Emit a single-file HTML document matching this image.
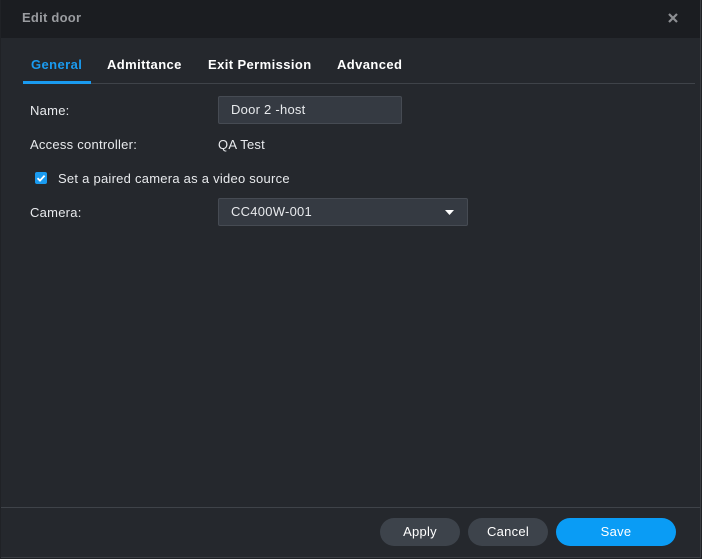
<!DOCTYPE html>
<html><head><meta charset="utf-8"><style>
*{margin:0;padding:0;box-sizing:border-box}
body{width:702px;height:559px;background:#202226;font-family:"Liberation Sans",sans-serif;font-size:13px;color:#e8eaed;position:relative;overflow:hidden;letter-spacing:0.25px}
.dlg{position:absolute;left:1px;top:0;width:700px;height:558px;background:#25282d;border-right:1px solid #3a3d42;border-bottom:1px solid #3a3d42}
.title{position:absolute;left:0;top:0;width:100%;height:38px;background:#1b1d21}
.title span{position:absolute;left:21px;top:10px;font-weight:bold;color:#9a9ca0;font-size:13px}
.x{position:absolute;left:666px;top:12px}
.tabs{position:absolute;left:22px;top:56px;width:672px;height:28px;border-bottom:1px solid #3f4349}
.tab{position:absolute;top:1px;font-weight:bold;color:#fff;font-size:13px;letter-spacing:0.4px}
.tab.act{color:#1a9bf0}
.ul{position:absolute;left:0;top:25px;width:68px;height:3px;background:#1a9bf0}
.lbl{position:absolute;left:29px;color:#e8eaed}
.inp{position:absolute;left:217px;background:#353a42;border:1px solid #464b53;border-radius:2px;color:#e8eaed;padding-left:12px}
.cb{position:absolute;left:34px;top:172px;width:12px;height:12px;background:#1a9bf0;border-radius:2px}
.foot{position:absolute;left:0;top:507px;width:100%;height:1px;background:#3f4349}
.btn{position:absolute;top:518px;height:28px;border-radius:14px;background:#3d434b;color:#fff;text-align:center;line-height:28px;font-size:13px}
</style></head><body>
<div class="dlg">
<div class="title"><span>Edit door</span>
<svg class="x" width="12" height="12" viewBox="0 0 12 12"><path d="M2 2L10 10M10 2L2 10" stroke="#8d8f93" stroke-width="2.2"/></svg></div>
<div class="tabs">
<span class="tab act" style="left:8px">General</span>
<span class="tab" style="left:84px">Admittance</span>
<span class="tab" style="left:185px">Exit Permission</span>
<span class="tab" style="left:314px">Advanced</span>
<div class="ul"></div></div>
<div class="lbl" style="top:103px">Name:</div>
<div class="inp" style="top:96px;width:184px;height:28px;line-height:26px">Door 2 -host</div>
<div class="lbl" style="top:137px">Access controller:</div>
<div style="position:absolute;left:217px;top:137px">QA Test</div>
<div class="cb"><svg width="12" height="12" viewBox="0 0 12 12"><path d="M2.5 6.2L5 8.6L9.6 3.6" stroke="#fff" stroke-width="1.8" fill="none"/></svg></div>
<div style="position:absolute;left:57px;top:171px">Set a paired camera as a video source</div>
<div class="lbl" style="top:205px">Camera:</div>
<div class="inp" style="top:198px;width:250px;height:28px;line-height:26px">CC400W-001
<svg style="position:absolute;left:226px;top:11px" width="9" height="5" viewBox="0 0 9 5"><path d="M0 0H9L4.5 5Z" fill="#fff"/></svg></div>
<div class="foot"></div>
<div class="btn" style="left:379px;width:80px">Apply</div>
<div class="btn" style="left:467px;width:80px">Cancel</div>
<div class="btn" style="left:555px;width:120px;background:#0a9cf5">Save</div>
</div>
</body></html>
